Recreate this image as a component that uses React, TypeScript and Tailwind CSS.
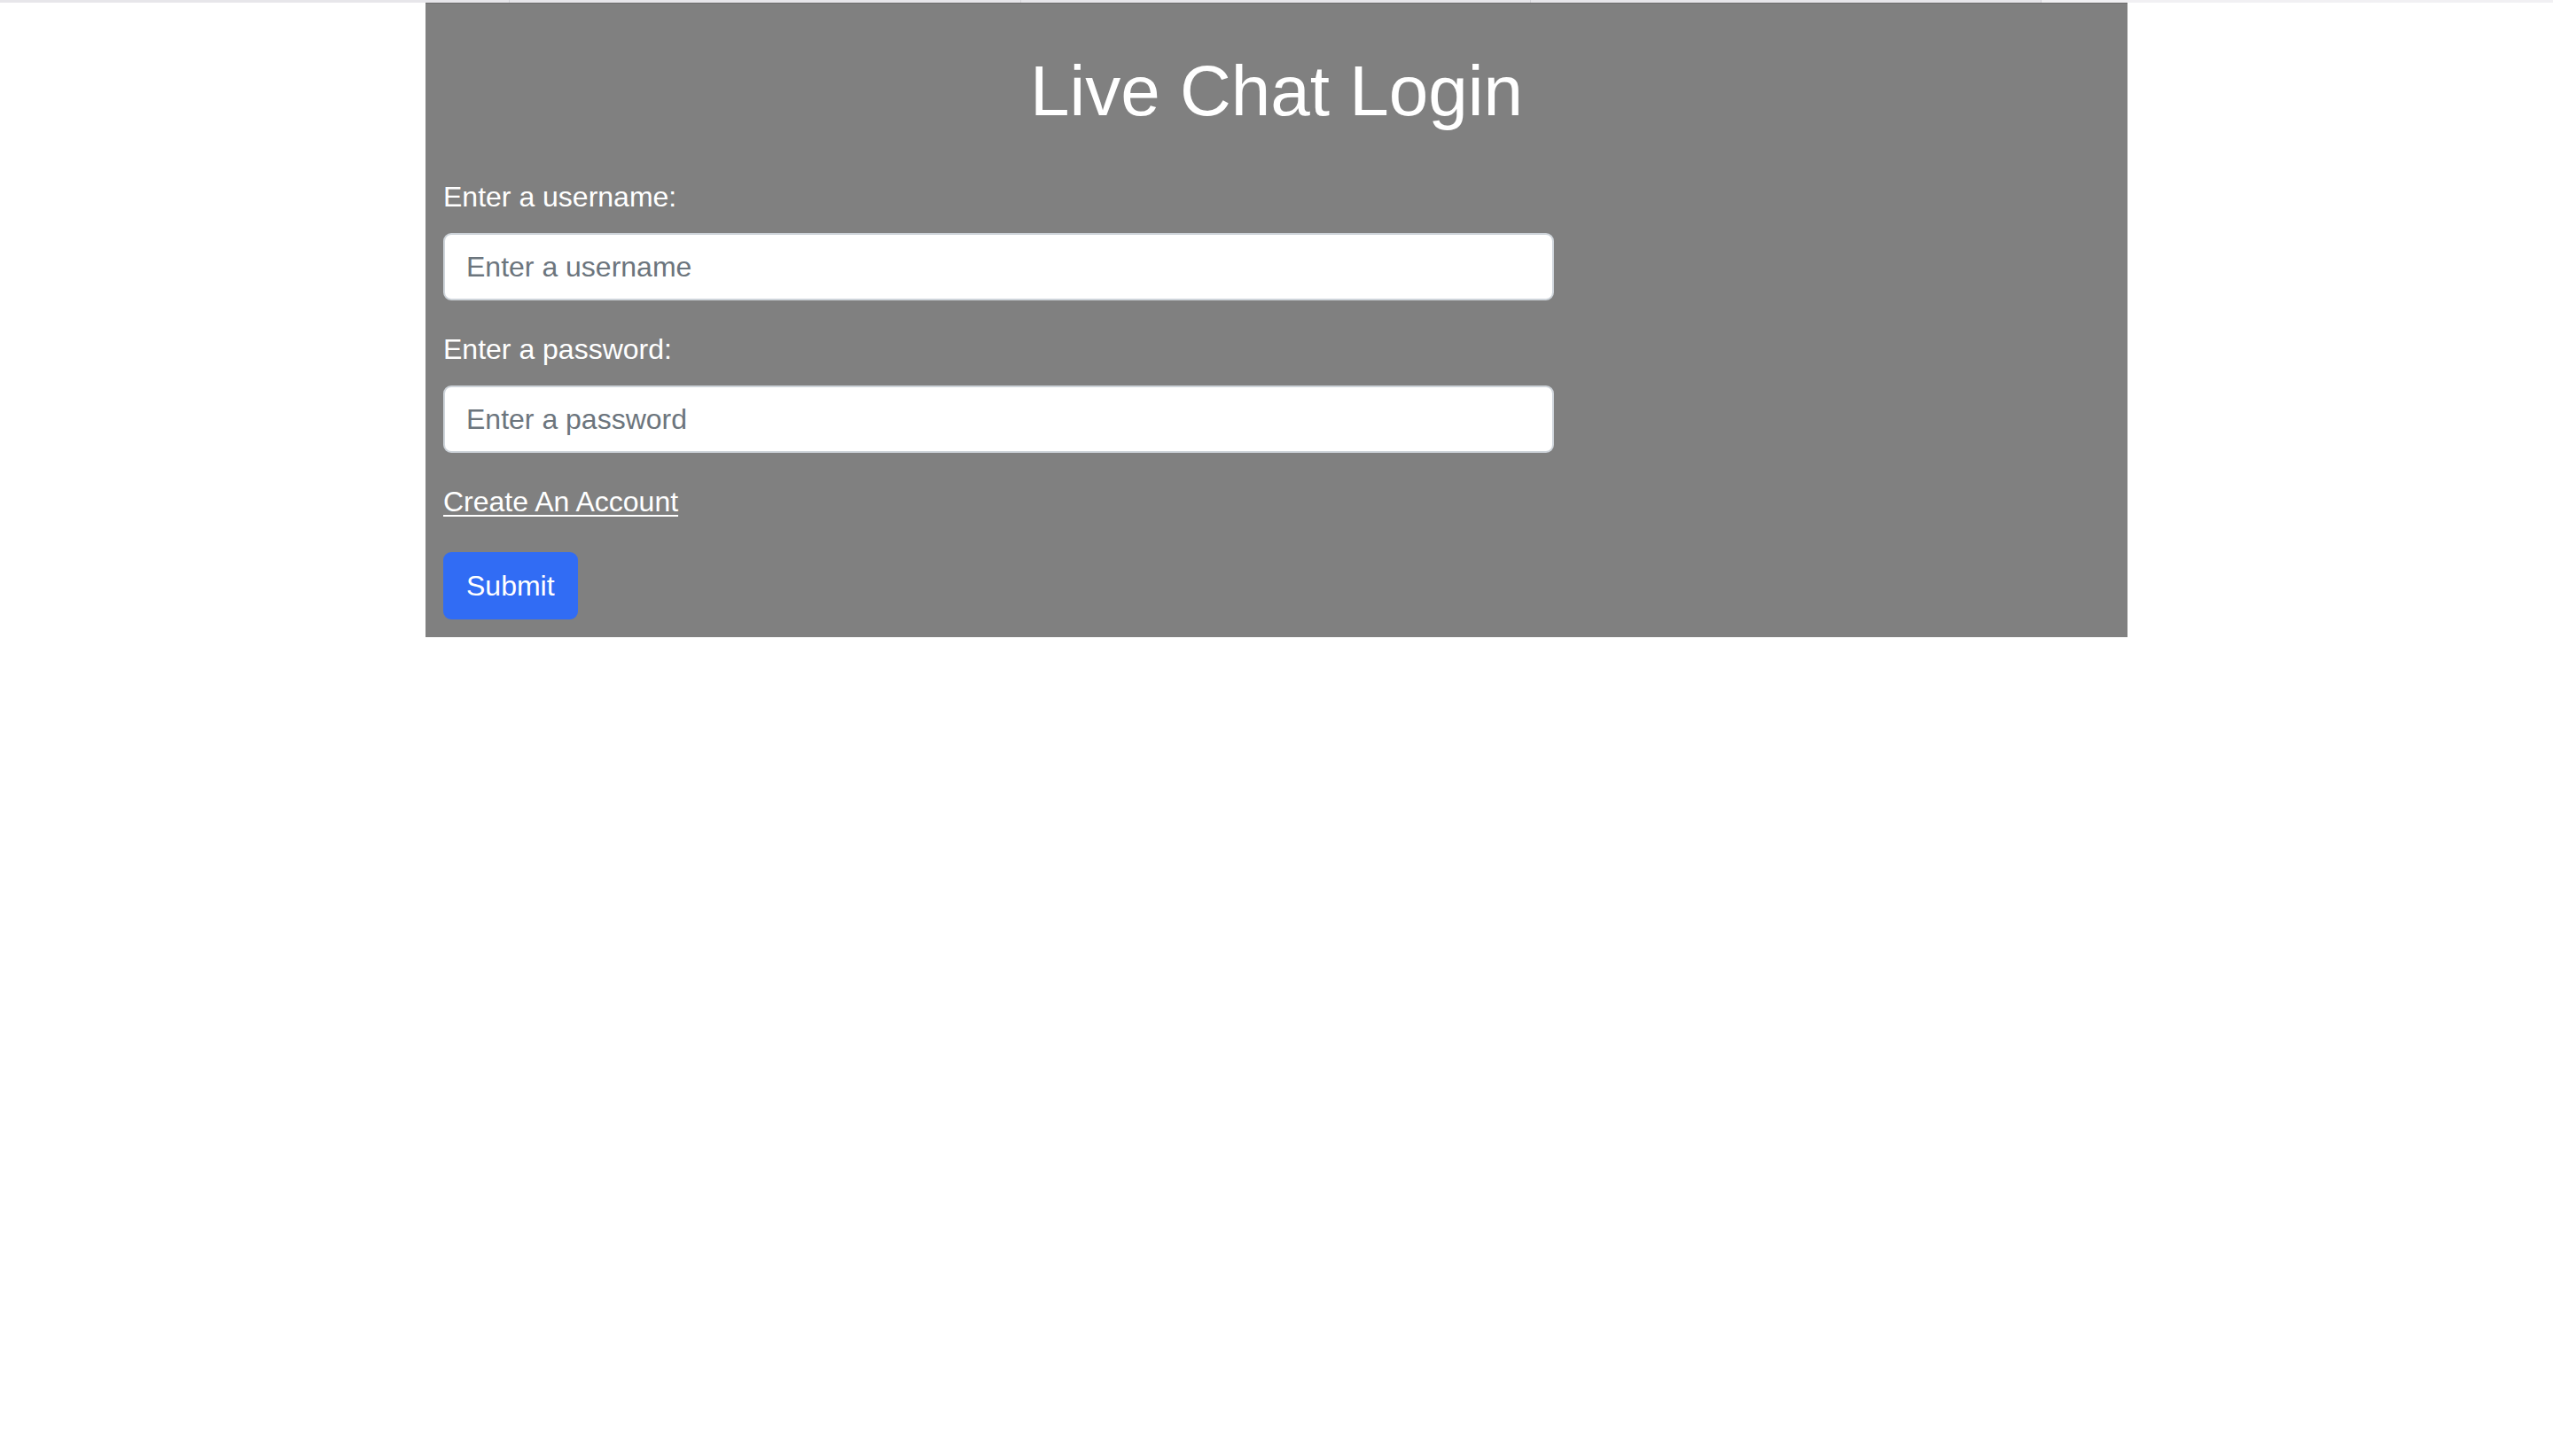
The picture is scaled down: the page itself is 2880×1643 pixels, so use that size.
import { useState } from "react";

const font = { fontFamily: '"Liberation Sans", Arial, Helvetica, sans-serif' };

export default function App() {
  const [username, setUsername] = useState("");
  const [password, setPassword] = useState("");

  return (
    <div className="min-h-screen bg-white" style={font}>
      {/* thin strip left over from the browser tabs */}
      <div className="flex h-[3px] w-full bg-[#e7e6ea]">
        <div className="w-[575px] border-r border-[#d4d3d8]" />
        <div className="w-[577px] border-r border-[#d4d3d8]" />
        <div className="w-[575px] border-r border-[#d4d3d8]" />
        <div className="w-[576px] border-r border-[#d4d3d8]" />
        <div className="flex-1 bg-[#f1f0f3]" />
      </div>

      <div className="mx-auto w-[1920px] border-t border-[#6e6e6e] bg-[#808080] px-[20px] pt-[51px] pb-[20px]">
        <h1 className="mb-[47px] text-center text-[80px] leading-[96px] font-normal text-white">
          Live Chat Login
        </h1>

        <form onSubmit={(e) => e.preventDefault()}>
          <div className="mb-[31px]">
            <label
              htmlFor="username"
              className="mb-[17px] block text-[32px] leading-[48px] text-white"
            >
              Enter a username:
            </label>
            <input
              id="username"
              type="text"
              value={username}
              onChange={(e) => setUsername(e.target.value)}
              placeholder="Enter a username"
              className="block h-[76px] w-[1253px] rounded-[9px] border-2 border-[#ced4da] bg-white px-[24px] py-[12px] text-[32px] leading-[48px] text-[#212529] outline-none placeholder:text-[#6c757d]"
            />
          </div>

          <div className="mb-[31px]">
            <label
              htmlFor="password"
              className="mb-[17px] block text-[32px] leading-[48px] text-white"
            >
              Enter a password:
            </label>
            <input
              id="password"
              type="password"
              value={password}
              onChange={(e) => setPassword(e.target.value)}
              placeholder="Enter a password"
              className="block h-[76px] w-[1253px] rounded-[9px] border-2 border-[#ced4da] bg-white px-[24px] py-[12px] text-[32px] leading-[48px] text-[#212529] outline-none placeholder:text-[#6c757d]"
            />
          </div>

          <div className="mb-[33px]">
            <a
              href="#"
              className="text-[32px] leading-[48px] text-white underline decoration-2 underline-offset-[4px]"
            >
              Create An Account
            </a>
          </div>

          <button
            type="submit"
            className="h-[76px] rounded-[9px] border-2 border-[#316cf4] bg-[#316cf4] px-[24px] text-[32px] leading-[48px] text-white"
          >
            Submit
          </button>
        </form>
      </div>
    </div>
  );
}
